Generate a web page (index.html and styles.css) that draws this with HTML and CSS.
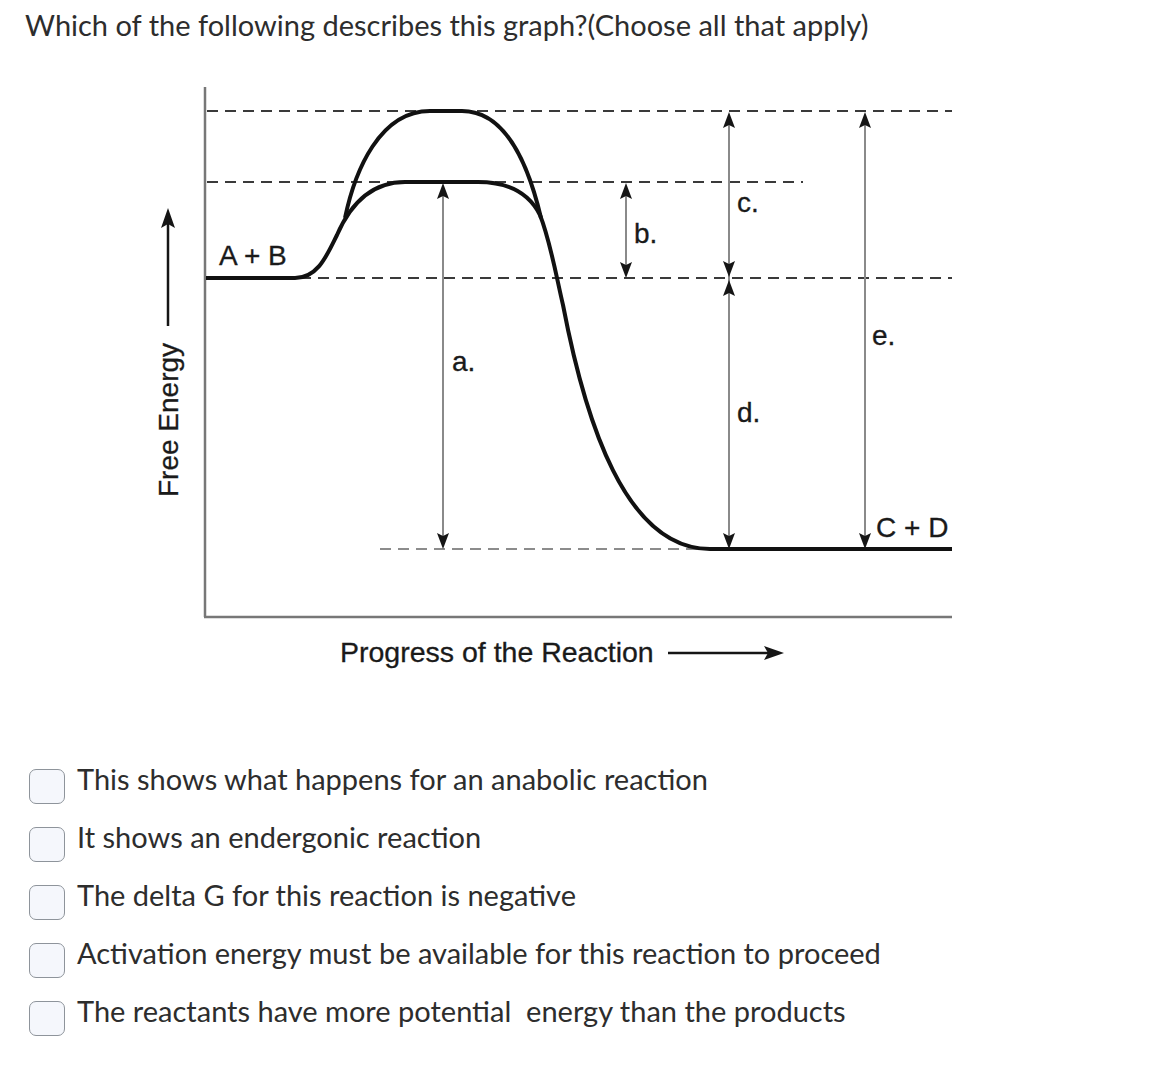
FILE: index.html
```html
<!DOCTYPE html>
<html lang="en">
<head>
<meta charset="utf-8">
<title>Question</title>
<link rel="stylesheet" href="styles.css">
</head>
<body>
<div class="question">
  <p class="prompt">Which of the following describes this graph?(Choose all that apply)</p>
  <svg class="graph" width="960" height="640" viewBox="0 60 960 640" xmlns="http://www.w3.org/2000/svg">
    <!-- axes -->
    <line class="axis" x1="205" y1="87" x2="205" y2="617"/>
    <line class="axis" x1="204" y1="617" x2="952" y2="617"/>
    <!-- dashed reference lines -->
    <line class="dash" x1="207" y1="111" x2="952" y2="111"/>
    <line class="dash" x1="207" y1="182" x2="803" y2="182"/>
    <line class="dash" x1="300" y1="278" x2="952" y2="278"/>
    <line class="dash light" x1="380" y1="549" x2="705" y2="549"/>
    <!-- energy curves -->
    <path class="curve" d="M206,278 H295 C318,278 327,255 337,235 C350,205 370,182 405,182 H478 C510,182 530,195 540,215 C550,240 556,275 563,305 C585,420 625,549 710,549 H952"/>
    <path class="curve" d="M345,218 C355,170 380,111 430,111 H462 C500,111 525,150 541,218"/>
    <!-- measurement arrows -->
    <line class="shaft" x1="443" y1="190" x2="443" y2="542"/>
    <polygon class="head" points="443,183 449,199 443,196 437,199"/>
    <polygon class="head" points="443,549 449,533 443,536 437,533"/>

    <line class="shaft" x1="626" y1="190" x2="626" y2="271"/>
    <polygon class="head" points="626,183 632,199 626,196 620,199"/>
    <polygon class="head" points="626,278 632,262 626,265 620,262"/>

    <line class="shaft" x1="729" y1="118" x2="729" y2="542"/>
    <polygon class="head" points="729,112 735,128 729,125 723,128"/>
    <polygon class="head" points="729,277 735,261 729,264 723,261"/>
    <polygon class="head" points="729,280 735,296 729,293 723,296"/>
    <polygon class="head" points="729,549 735,533 729,536 723,533"/>

    <line class="shaft" x1="865" y1="118" x2="865" y2="542"/>
    <polygon class="head" points="865,112 871,128 865,125 859,128"/>
    <polygon class="head" points="865,549 871,533 865,536 859,533"/>

    <!-- axis direction arrows -->
    <line class="dir" x1="168" y1="326" x2="168" y2="220"/>
    <polygon class="dirhead" points="168,208 175,228 168,224 161,228"/>
    <line class="dir" x1="668" y1="653" x2="772" y2="653"/>
    <polygon class="dirhead" points="784,653 764,646 768,653 764,660"/>

    <!-- labels -->
    <text class="lbl" x="219" y="265">A + B</text>
    <text class="lbl" x="876" y="537">C + D</text>
    <text class="lbl" x="452" y="371">a.</text>
    <text class="lbl" x="634" y="243">b.</text>
    <text class="lbl" x="737" y="212">c.</text>
    <text class="lbl" x="737" y="422">d.</text>
    <text class="lbl" x="872" y="345">e.</text>
    <text class="lbl wide" x="340" y="662">Progress of the Reaction</text>
    <text class="lbl" transform="translate(178,497) rotate(-90)">Free Energy</text>
  </svg>

  <ul class="options">
    <li class="option"><span class="box"></span><span class="text">This shows what happens for an anabolic reaction</span></li>
    <li class="option"><span class="box"></span><span class="text">It shows an endergonic reaction</span></li>
    <li class="option"><span class="box"></span><span class="text">The delta G for this reaction is negative</span></li>
    <li class="option"><span class="box"></span><span class="text">Activation energy must be available for this reaction to proceed</span></li>
    <li class="option"><span class="box"></span><span class="text">The reactants have more potential&nbsp; energy than the products</span></li>
  </ul>
</div>
</body>
</html>
```
FILE: styles.css
```css
html, body {
  margin: 0;
  padding: 0;
  background: #ffffff;
}

body {
  font-family: Lato, "Open Sans", sans-serif;
  color: #2d2d2d;
}

.question {
  width: 1165px;
}

.prompt {
  margin: 7px 0 0 25px;
  font-size: 29px;
  line-height: 35px;
}

.graph {
  display: block;
  margin-top: 18px;
}

.axis {
  stroke: #777777;
  stroke-width: 2.5;
}

.dash {
  stroke: #3a3a3a;
  stroke-width: 2;
  stroke-dasharray: 11 7;
}

.dash.light {
  stroke: #8c8c8c;
}

.curve {
  fill: none;
  stroke: #111111;
  stroke-width: 4;
  stroke-linejoin: round;
}

.shaft {
  stroke: #8a8a8a;
  stroke-width: 2;
}

.head,
.dirhead {
  fill: #151515;
}

.dir {
  stroke: #151515;
  stroke-width: 2.5;
}

.lbl {
  font-family: "Liberation Sans", Arial, sans-serif;
  font-size: 28px;
  fill: #1a1a1a;
  stroke: #1a1a1a;
  stroke-width: 0.3;
}

.lbl.wide {
  font-size: 28.5px;
}

.options {
  list-style: none;
  margin: 61px 0 0 0;
  padding: 0;
}

.option {
  display: flex;
  align-items: flex-start;
  height: 58px;
}

.box {
  box-sizing: border-box;
  width: 36px;
  height: 35px;
  margin: 8px 12px 0 29px;
  border: 1.5px solid #8e949b;
  border-radius: 7px;
  background: #f5f7fc;
  flex: none;
}

.text {
  font-size: 29px;
  line-height: 35px;
  white-space: pre;
}
```
